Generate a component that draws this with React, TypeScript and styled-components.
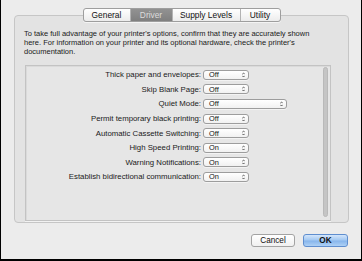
import React from 'react';
import styled, { createGlobalStyle } from 'styled-components';

const GlobalStyle = createGlobalStyle`
  html, body {
    margin: 0;
    padding: 0;
    background: #ececec;
  }
  body {
    font-family: "Liberation Sans", Arial, sans-serif;
    color: #1a1a1a;
  }
`;

const Window = styled.div`
  width: 362px;
  height: 261px;
  box-sizing: border-box;
  background: #ececec;
  border-left: 1px solid #000;
  border-right: 1px solid #000;
  border-bottom: 2px solid #000;
  padding: 15px 12px 0 13px;
  display: flex;
  flex-direction: column;
  overflow: hidden;
`;

const GroupBox = styled.div`
  height: 208px;
  box-sizing: border-box;
  border: 1px solid #c6c6c6;
  border-radius: 4px;
  background: #e3e3e3;
  display: flex;
  flex-direction: column;
`;

const Tabs = styled.div`
  align-self: center;
  margin-top: -8px;
  height: 14px;
  box-sizing: border-box;
  display: flex;
  border: 1px solid #9e9e9e;
  border-radius: 3px;
  background: linear-gradient(#ffffff, #ececec);
  overflow: hidden;
  box-shadow: 0 1px 0 rgba(255, 255, 255, 0.6);
`;

const Tab = styled.div<{ $w: number; $active?: boolean }>`
  width: ${(p) => p.$w}px;
  display: flex;
  align-items: center;
  justify-content: center;
  font-size: 8.4px;
  color: ${(p) => (p.$active ? '#dcdcdc' : '#111')};
  background: ${(p) => (p.$active ? 'linear-gradient(#929292, #7f7f7f)' : 'transparent')};
  & + & {
    border-left: 1px solid #b3b3b3;
  }
`;

const Description = styled.div`
  margin: 7px 0 0 9px;
  font-size: 7.5px;
  line-height: 9px;
  white-space: nowrap;
  color: #1a1a1a;
`;

const InnerBox = styled.div`
  margin: 8.5px 17px 0 10px;
  height: 156px;
  box-sizing: border-box;
  border: 1px solid #c3c3c3;
  background: #e6e6e6;
  box-shadow: 0 1px 0 #f2f2f2, inset 1px 1px 0 #dadada;
  display: flex;
`;

const Options = styled.div`
  flex: 1;
  padding-top: 2px;
  display: grid;
  grid-template-columns: 175px auto;
  grid-auto-rows: 14.6px;
  column-gap: 2px;
  align-content: start;
  align-items: center;
`;

const Label = styled.div`
  text-align: right;
  font-size: 7.8px;
  white-space: nowrap;
  color: #1a1a1a;
`;

const Select = styled.div<{ $w: number }>`
  width: ${(p) => p.$w}px;
  height: 10px;
  box-sizing: border-box;
  border: 1px solid #9d9d9d;
  border-radius: 3px;
  background: linear-gradient(#ffffff, #f1f1f1);
  display: flex;
  align-items: center;
  justify-content: space-between;
  padding: 0 3px 0 5px;
  font-size: 7.4px;
  color: #111;
  box-shadow: 0 1px 0 rgba(255, 255, 255, 0.5);
`;

const Scroller = styled.div`
  width: 5px;
  margin: 1px 2px 3px 0;
  box-sizing: border-box;
  border-radius: 3px;
  background: #c5c5c5;
  border: 1px solid #b9b9b9;
`;

const ButtonRow = styled.div`
  margin-top: 11px;
  margin-right: 1px;
  display: flex;
  justify-content: flex-end;
  gap: 8px;
`;

const Button = styled.div<{ $w: number; $primary?: boolean }>`
  width: ${(p) => p.$w}px;
  height: 13px;
  box-sizing: border-box;
  border-radius: 3px;
  border: 1px solid ${(p) => (p.$primary ? '#5f8ecf' : '#a3a3a3')};
  background: ${(p) =>
    p.$primary
      ? 'linear-gradient(#d4e6fb 0%, #a4c9f2 45%, #88b6ec 55%, #aed1f5 100%)'
      : 'linear-gradient(#ffffff, #f0f0f0)'};
  display: flex;
  align-items: center;
  justify-content: center;
  font-size: 8.2px;
  font-weight: ${(p) => (p.$primary ? 'bold' : 'normal')};
  color: #111;
`;

const Chevrons = () => (
  <svg width="3" height="6" viewBox="0 0 3 6" fill="none" stroke="#333" strokeWidth="0.8">
    <path d="M0.3 2.2 L1.5 1 L2.7 2.2" />
    <path d="M0.3 3.8 L1.5 5 L2.7 3.8" />
  </svg>
);

const options: { label: string; value: string; wide?: boolean }[] = [
  { label: 'Thick paper and envelopes:', value: 'Off' },
  { label: 'Skip Blank Page:', value: 'Off' },
  { label: 'Quiet Mode:', value: 'Off', wide: true },
  { label: 'Permit temporary black printing:', value: 'Off' },
  { label: 'Automatic Cassette Switching:', value: 'Off' },
  { label: 'High Speed Printing:', value: 'On' },
  { label: 'Warning Notifications:', value: 'On' },
  { label: 'Establish bidirectional communication:', value: 'On' },
];

const App = () => (
  <>
    <GlobalStyle />
    <Window>
      <GroupBox>
        <Tabs>
          <Tab $w={46}>General</Tab>
          <Tab $w={41} $active>
            Driver
          </Tab>
          <Tab $w={67}>Supply Levels</Tab>
          <Tab $w={39}>Utility</Tab>
        </Tabs>
        <Description>
          To take full advantage of your printer's options, confirm that they are accurately shown
          <br />
          here. For information on your printer and its optional hardware, check the printer's
          <br />
          documentation.
        </Description>
        <InnerBox>
          <Options>
            {options.map((o) => (
              <React.Fragment key={o.label}>
                <Label>{o.label}</Label>
                <Select $w={o.wide ? 84 : 46}>
                  <span>{o.value}</span>
                  <Chevrons />
                </Select>
              </React.Fragment>
            ))}
          </Options>
          <Scroller />
        </InnerBox>
      </GroupBox>
      <ButtonRow>
        <Button $w={44}>Cancel</Button>
        <Button $w={45} $primary>
          OK
        </Button>
      </ButtonRow>
    </Window>
  </>
);

export default App;
